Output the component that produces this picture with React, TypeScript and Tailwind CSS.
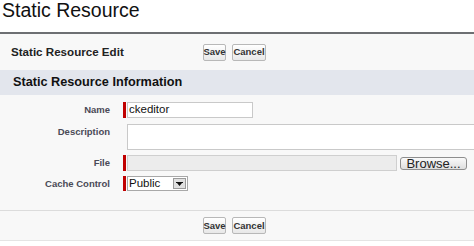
import React from 'react';

const Btn: React.FC<{ label: string; w: string }> = ({ label, w }) => (
  <button
    className={`${w} h-[17px] rounded-[2px] border border-[#b8b8b8] bg-gradient-to-b from-white to-[#e8e8e8] text-[9.5px] font-bold text-[#333] leading-none flex items-center justify-center`}
  >
    {label}
  </button>
);

const ButtonPair = () => (
  <div className="flex gap-[6px]">
    <Btn label="Save" w="w-[23px]" />
    <Btn label="Cancel" w="w-[34px]" />
  </div>
);

const Row: React.FC<{ label: string; top?: boolean; children: React.ReactNode }> = ({ label, top, children }) => (
  <div className={`flex ${top ? 'items-start' : 'items-center'}`}>
    <div className={`w-[110px] text-right text-[9.5px] font-bold text-[#4a4a56] leading-none ${top ? 'pt-[3px]' : ''}`}>
      {label}
    </div>
    <div className="ml-[13px] flex flex-1 items-stretch">{children}</div>
  </div>
);

const Required = () => <div className="w-[3px] bg-[#c00000] mr-[1px]" />;

export default function App() {
  return (
    <div className="w-[474px] h-[246px] bg-white overflow-hidden font-['Liberation_Sans',Arial,sans-serif]">
      <h1 className="pl-[2px] text-[19.5px] leading-[20px] h-[32px] text-[#111] font-normal">Static Resource</h1>

      <div className="border-t-2 border-[#6d6f72] border-b border-b-[#e4e4e4] bg-[#f8f8f8]">
        <div className="flex items-center h-[36px] pl-[11px]">
          <div className="w-[192px] text-[11.6px] font-bold text-[#222]">Static Resource Edit</div>
          <ButtonPair />
        </div>

        <div className="h-[25px] bg-[#e3e6ed] flex items-center pl-[13px] text-[12.7px] font-bold text-[#111]">
          Static Resource Information
        </div>

        <div className="pt-[7px] pb-[19px] flex flex-col">
          <Row label="Name">
            <Required />
            <div className="w-[126px] h-[16px] bg-white border border-[#c9c9c9] flex items-center pl-[1px] text-[11.5px] text-[#111]">
              ckeditor
            </div>
          </Row>

          <div className="mt-[6px]">
            <Row label="Description" top>
              <div className="ml-[4px] flex-1 h-[26px] bg-white border border-[#c9c9c9] border-r-0" />
            </Row>
          </div>

          <div className="mt-[5px]">
            <Row label="File">
              <Required />
              <div className="w-[270px] h-[16px] bg-[#ececec] border border-[#cfcfcf]" />
              <div className="ml-[3px] flex items-center">
                <button className="w-[67px] h-[13px] rounded-[3px] border border-[#8e8e8e] bg-gradient-to-b from-[#fafafa] to-[#dedede] text-[13px] leading-none text-[#222] flex items-center justify-center">
                  Browse...
                </button>
              </div>
            </Row>
          </div>

          <div className="mt-[5px]">
            <Row label="Cache Control">
              <Required />
              <div className="w-[61px] h-[15px] bg-white border border-[#a8a8a8] flex items-center justify-between pl-[1px] pr-[1px]">
                <span className="text-[11.5px] leading-none text-[#111]">Public</span>
                <span className="w-[13px] h-[11px] bg-[#e0e0e0] border border-[#9a9a9a] flex items-center justify-center">
                  <svg width="7" height="4" viewBox="0 0 7 4">
                    <path d="M0 0h7v1H0zM1 1h5L3.5 4z" fill="#111" />
                  </svg>
                </span>
              </div>
            </Row>
          </div>
        </div>

        <div className="border-t border-[#dcdcdc] h-[30px] flex items-center pl-[203px]">
          <ButtonPair />
        </div>
      </div>
    </div>
  );
}
